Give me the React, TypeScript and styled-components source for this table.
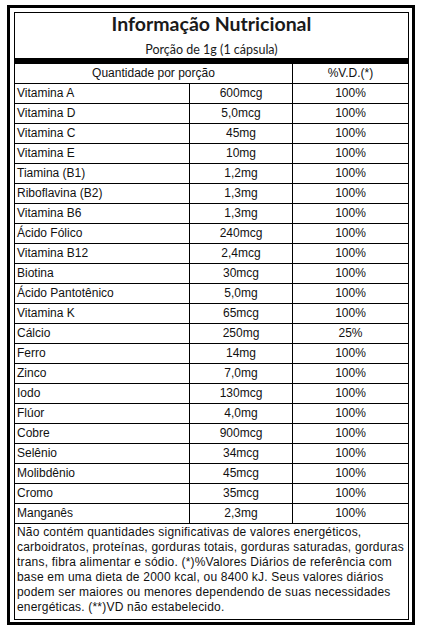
import React from "react";
import styled, { createGlobalStyle } from "styled-components";

const GlobalStyle = createGlobalStyle`
  html, body { margin: 0; padding: 0; background: #ffffff; }
  body { font-family: "Liberation Sans", Arial, sans-serif; color: #111; }
`;

const Frame = styled.div`
  box-sizing: border-box;
  margin: 5px 0 0 7px;
  width: 408px;
  height: 620px;
  border: 3px solid #000;
  padding: 4px 3px 2px 4px;
  background: #fff;
`;

const Panel = styled.div`
  box-sizing: border-box;
  height: 100%;
  border: 1px solid #000;
  display: flex;
  flex-direction: column;
`;

const Heading = styled.div`
  height: 45px;
  display: flex;
  flex-direction: column;
  align-items: center;
  justify-content: flex-start;
`;

const Title = styled.div`
  font-family: Lato, "Open Sans", sans-serif;
  font-weight: 700;
  font-size: 19.5px;
  line-height: 24px;
  margin-top: -1px;
  color: #1a1a1a;
`;

const Subtitle = styled.div`
  font-family: Lato, "Open Sans", sans-serif;
  font-size: 12.5px;
  line-height: 16px;
  margin-top: 6px;
  color: #1a1a1a;
`;

const Bar = styled.div`
  height: 6px;
  background: #000;
`;

const Grid = styled.div`
  display: grid;
  grid-template-columns: 174px 102px 1fr;
  grid-auto-rows: 19px;
  gap: 1px;
  background: #000;
  border-bottom: 1px solid #000;
`;

const Cell = styled.div<{ $align?: "left" | "center"; $span?: number }>`
  background: #fff;
  font-size: 12px;
  line-height: 19px;
  white-space: nowrap;
  padding-left: ${(p) => (p.$align === "center" ? "0" : "2px")};
  text-align: ${(p) => p.$align ?? "left"};
  grid-column: ${(p) => (p.$span ? `span ${p.$span}` : "auto")};
`;

const Note = styled.div`
  font-size: 12px;
  line-height: 15px;
  padding: 1px 0 0 2px;
  letter-spacing: 0.2px;
  white-space: nowrap;
`;

const rows: [string, string, string][] = [
  ["Vitamina A", "600mcg", "100%"],
  ["Vitamina D", "5,0mcg", "100%"],
  ["Vitamina C", "45mg", "100%"],
  ["Vitamina E", "10mg", "100%"],
  ["Tiamina (B1)", "1,2mg", "100%"],
  ["Riboflavina (B2)", "1,3mg", "100%"],
  ["Vitamina B6", "1,3mg", "100%"],
  ["Ácido Fólico", "240mcg", "100%"],
  ["Vitamina B12", "2,4mcg", "100%"],
  ["Biotina", "30mcg", "100%"],
  ["Ácido Pantotênico", "5,0mg", "100%"],
  ["Vitamina K", "65mcg", "100%"],
  ["Cálcio", "250mg", "25%"],
  ["Ferro", "14mg", "100%"],
  ["Zinco", "7,0mg", "100%"],
  ["Iodo", "130mcg", "100%"],
  ["Flúor", "4,0mg", "100%"],
  ["Cobre", "900mcg", "100%"],
  ["Selênio", "34mcg", "100%"],
  ["Molibdênio", "45mcg", "100%"],
  ["Cromo", "35mcg", "100%"],
  ["Manganês", "2,3mg", "100%"],
];

const noteLines = [
  "Não contém quantidades significativas de valores energéticos,",
  "carboidratos, proteínas, gorduras totais, gorduras saturadas, gorduras",
  "trans, fibra alimentar e sódio. (*)%Valores Diários de referência com",
  "base em uma dieta de 2000 kcal, ou 8400 kJ. Seus valores diários",
  "podem ser maiores ou menores dependendo de suas necessidades",
  "energéticas. (**)VD não estabelecido.",
];

export default function App() {
  return (
    <>
      <GlobalStyle />
      <Frame>
        <Panel>
          <Heading>
            <Title>Informação Nutricional</Title>
            <Subtitle>Porção de 1g (1 cápsula)</Subtitle>
          </Heading>
          <Bar />
          <Grid>
            <Cell $align="center" $span={2}>Quantidade por porção</Cell>
            <Cell $align="center">%V.D.(*)</Cell>
            {rows.map(([n, q, v]) => (
              <React.Fragment key={n}>
                <Cell>{n}</Cell>
                <Cell $align="center">{q}</Cell>
                <Cell $align="center">{v}</Cell>
              </React.Fragment>
            ))}
          </Grid>
          <Note>
            {noteLines.map((l, i) => (
              <div key={i}>{l}</div>
            ))}
          </Note>
        </Panel>
      </Frame>
    </>
  );
}
